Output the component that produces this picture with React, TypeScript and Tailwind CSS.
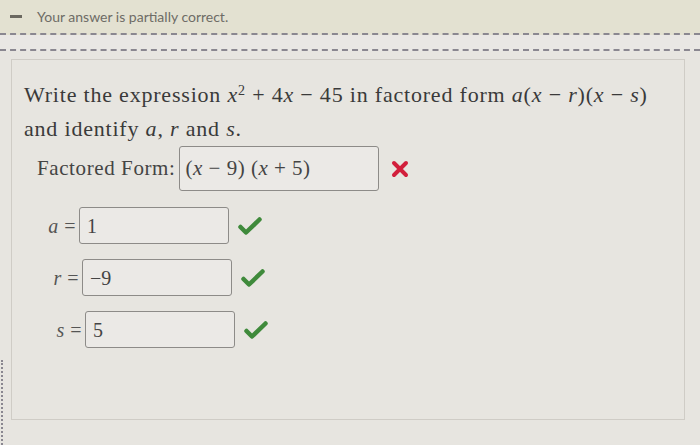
import React from 'react';

const serif = { fontFamily: '"Liberation Serif", "DejaVu Serif", serif' };

function Check() {
  return (
    <svg width="24" height="20" viewBox="0 0 24 20" className="shrink-0">
      <path d="M2.5 11 L8 16.5 L21.5 3.5" fill="none" stroke="#3f8a3b" strokeWidth="4.5" strokeLinecap="round" strokeLinejoin="round" />
    </svg>
  );
}

function Cross() {
  return (
    <svg width="18" height="18" viewBox="0 0 18 18" className="shrink-0">
      <path d="M3 3 L15 15 M15 3 L3 15" fill="none" stroke="#d21f3c" strokeWidth="4" strokeLinecap="round" />
    </svg>
  );
}

function Field({ label, value, indent }: { label: React.ReactNode; value: React.ReactNode; indent: string }) {
  return (
    <div className={`flex items-center ${indent}`} style={serif}>
      <span className="w-[40px] text-right pr-[3px] text-[20px] tracking-[0.5px] text-[#555]" style={serif}>
        {label}
      </span>
      <div
        className="w-[150px] h-[37px] rounded-[3px] border border-[#8d8b88] bg-[#ebe9e6] flex items-center px-[7px] text-[20px] text-[#444]"
        style={serif}
      >
        {value}
      </div>
      <div className="ml-[9px]">
        <Check />
      </div>
    </div>
  );
}

export default function App() {
  return (
    <div className="w-[700px] h-[445px] bg-[#e7e5e0] overflow-hidden relative" style={serif}>
      <div className="h-[35px] bg-[#e3e1d1] flex items-center pl-[10px] border-b-2 border-dashed border-[#8a8790]">
        <span className="w-[12px] h-[3px] bg-[#6b6860] mr-[15px]" />
        <span className="text-[14px] text-[#6e6c66]" style={{ fontFamily: 'Lato, "Open Sans", sans-serif' }}>
          Your answer is partially correct.
        </span>
      </div>
      <div className="h-[16px] bg-[#e9e7e4] border-b-2 border-dashed border-[#8a8790]" />
      <div className="ml-[11px] mr-[15px] mt-[8px] h-[361px] border border-[#cfccc6] pt-[18px] pl-[12px]">
        <p className="text-[22px] leading-[34px] tracking-[0.8px] text-[#3a3a3a]">
          Write the expression <i>x</i>
          <sup className="text-[14px]">2</sup> + 4<i>x</i> − 45 in factored form <i>a</i>(<i>x</i> − <i>r</i>)(<i>x</i> − <i>s</i>)
          <br />
          and identify <i>a</i>, <i>r</i> and <i>s</i>.
        </p>
        <div className="flex items-center pl-[13px]">
          <span className="text-[21px] tracking-[0.6px] text-[#444] mr-[4px]">Factored Form:</span>
          <div className="w-[200px] h-[45px] rounded-[3px] border border-[#8d8b88] bg-[#ebe9e6] flex items-center px-[5px] text-[21px] tracking-[0.5px] text-[#444]">
            (<i>x</i>&nbsp;−&nbsp;9)&nbsp;(<i>x</i>&nbsp;+&nbsp;5)
          </div>
          <div className="ml-[12px]">
            <Cross />
          </div>
        </div>
        <div className="flex flex-col gap-[15px] mt-[16px]">
          <Field label={<><i>a</i> =</>} value="1" indent="pl-[15px]" />
          <Field label={<><i>r</i> =</>} value="−9" indent="pl-[18px]" />
          <Field label={<><i>s</i> =</>} value="5" indent="pl-[21px]" />
        </div>
      </div>
      <div className="absolute left-[1px] top-[360px] h-[85px] border-l-2 border-dotted border-[#8a8790]" />
    </div>
  );
}
